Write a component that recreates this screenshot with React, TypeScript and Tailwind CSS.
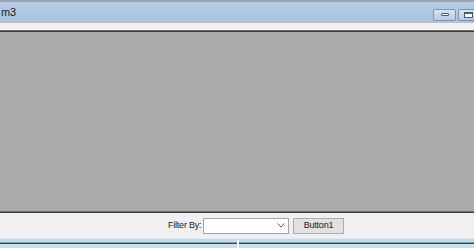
import React from "react";

const App = () => {
  return (
    <div className="flex h-[248px] w-[474px] flex-col overflow-hidden bg-[#ababab] font-['Liberation_Sans',sans-serif] text-[11px] text-black">
      {/* title bar */}
      <div className="h-[2px] bg-[#9aa4b0]" />
      <div className="flex h-[21px] items-center justify-between overflow-hidden bg-gradient-to-b from-[#b7cde6] to-[#a9c3e0]">
        <span className="pl-[1px] text-[11px] tracking-tight text-[#1a1a1a]">m3</span>
        <div className="-mr-[4px] flex gap-[2px] pt-[4px]">
          <div className="flex h-[12px] w-[23px] items-center justify-center rounded-[2px] border border-[#7f93ad] bg-gradient-to-b from-[#d8e4f1] to-[#b8cbe2]">
            <div className="h-[3px] w-[8px] rounded-[1px] border border-[#4d5b6c] bg-white" />
          </div>
          <div className="flex h-[12px] w-[20px] items-center justify-center rounded-[2px] border border-[#7f93ad] bg-gradient-to-b from-[#d8e4f1] to-[#b8cbe2]">
            <div className="h-[6px] w-[9px] border border-t-2 border-[#4d5b6c] bg-white" />
          </div>
        </div>
      </div>
      <div className="h-[7px] bg-gradient-to-b from-[#f6efea] to-[#f2f2f2]" />
      <div className="h-[1px] bg-[#6d6d6d]" />
      <div className="h-[1px] bg-[#3c3c3c]" />
      {/* grey body */}
      <div className="flex-1 bg-[#ababab]" />
      <div className="h-[1px] bg-[#6a6a6a]" />
      <div className="h-[1px] bg-[#3f3f3f]" />
      {/* filter panel */}
      <div className="flex h-[25px] items-center bg-[#f0f0f0] pl-[168px]">
        <span className="w-[35px] text-[9px] tracking-tight text-[#222]">Filter By:</span>
        <div className="flex h-[16px] w-[86px] items-center justify-end border border-[#a5a5a5] bg-white pr-[3px]">
          <svg width="8" height="5" viewBox="0 0 8 5">
            <path d="M0.5 0.5 L4 4 L7.5 0.5" fill="none" stroke="#555" strokeWidth="1" />
          </svg>
        </div>
        <div className="ml-[4px] flex h-[16px] w-[51px] items-center justify-center border border-[#adadad] bg-[#e1e1e1] text-[9px] tracking-tight text-[#222]">
          Button1
        </div>
      </div>
      {/* bottom bar */}
      <div className="h-[1px] bg-[#e4e9ee]" />
      <div className="h-[3px] bg-[#c3d8ee]" />
      <div className="h-[1px] bg-[#77a3b3]" />
      <div className="h-[1px] bg-[#274a52]" />
      <div className="relative h-[4px] flex-none bg-[#cfdde6]">
        <div className="absolute left-[237px] top-[-4px] h-[8px] w-[2px] bg-[#f8f8f8]" />
      </div>
    </div>
  );
};

export default App;
